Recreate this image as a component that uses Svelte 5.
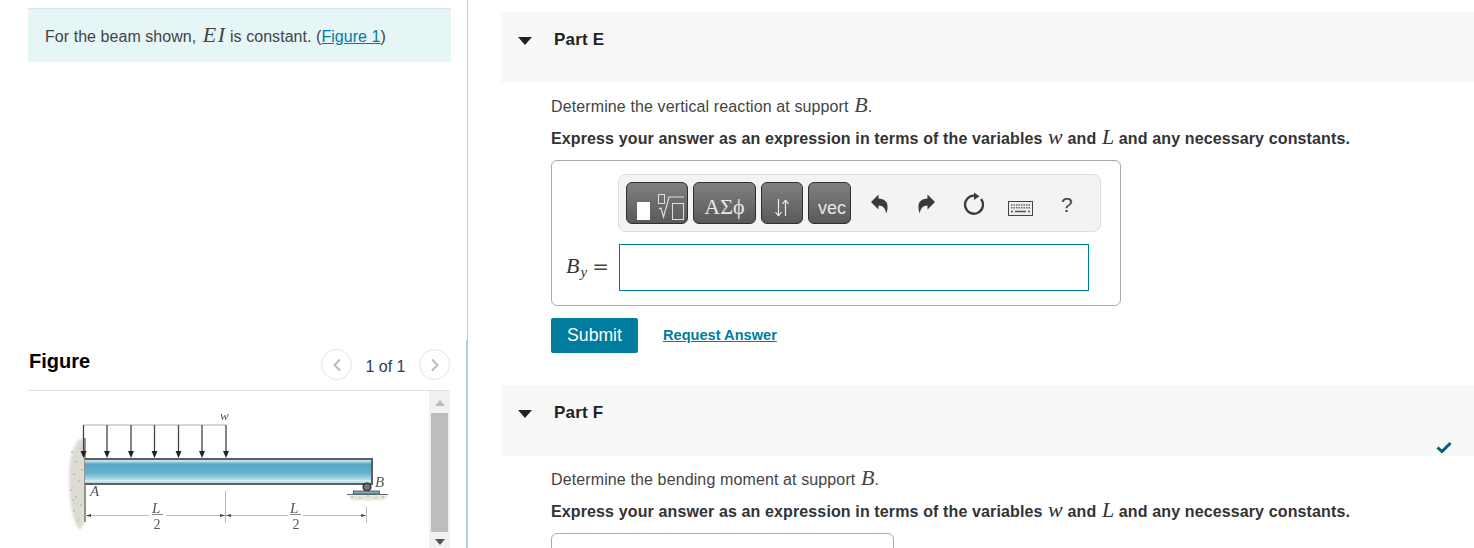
<script>
  const arrows = [83.5, 107, 131, 154.5, 178.5, 202, 226];
  const tools = [
    { cls: 'b1', w: 62 }, { cls: 'b2', w: 63 }, { cls: 'b3', w: 42 }, { cls: 'b4', w: 43 }
  ];
  const specks = [[72,452],[76,462],[80,448],[74,474],[79,481],[71,490],[76,497],[81,505],[74,511],[78,520],[82,470],[73,500],[352,497],[360,498],[368,496],[376,498],[383,497]];
</script>

<div class="page">
  <section class="left">
    <div class="intro"><span>For the beam shown, <i class="m big ei">EI</i> is constant. (<a href="#f">Figure 1</a>)</span></div>

    <div class="fig-head">
      <h2>Figure</h2>
      <div class="pager">
        <span class="circ"><svg width="10" height="14" viewBox="0 0 10 14"><path d="M8 1.500 2.500 7 8 12.500" fill="none" stroke="#bbb" stroke-width="2"/></svg></span>
        <span class="count">1 of 1</span>
        <span class="circ"><svg width="10" height="14" viewBox="0 0 10 14"><path d="M2 1.500 7.500 7 2 12.500" fill="none" stroke="#bbb" stroke-width="2"/></svg></span>
      </div>
    </div>

    <div class="fig-body">
      <div class="canvas">
        <svg width="402" height="157" viewBox="28 391 402 157" class="beam">
          <defs>
            <linearGradient id="bm" x1="0" y1="0" x2="0" y2="1">
              <stop offset="0" stop-color="#dcebef"/>
              <stop offset=".1" stop-color="#b4dae6"/>
              <stop offset=".2" stop-color="#55a8c6"/>
              <stop offset=".55" stop-color="#62b0cb"/>
              <stop offset=".8" stop-color="#a7d5e2"/>
              <stop offset=".86" stop-color="#d5ebf0"/>
              <stop offset="1" stop-color="#a6d4e0"/>
            </linearGradient>
          </defs>
          <path class="soft" d="M78 440 L85 438 V522 L80 530 C72 522 69 500 69 480 C69 462 71 450 78 440Z" fill="#dedcd2"/>
          <path class="soft" d="M348 495H388L384 500H352Z" fill="#e3e1d6"/>
          {#each specks as [x, y]}
            <circle cx={x} cy={y} r=".8" fill="#a9a79b"/>
          {/each}
          <path d="M85 438V522" stroke="#555" stroke-width="1.200"/>
          <path d="M83.500 425H226" stroke="#aaa" stroke-width="1"/>
          {#each arrows as x}
            <path d={`M${x} 425V451`} stroke="#444" stroke-width="1.300"/>
            <path d={`M${x - 3} 451H${x + 3}L${x} 458Z`} fill="#222"/>
          {/each}
          <rect x="85" y="459" width="287" height="25" fill="url(#bm)"/>
          <path d="M85 459H372V484H85" fill="none" stroke="#5a5f62" stroke-width="2"/>
          <circle cx="367" cy="487" r="3.800" fill="#777" stroke="#333" stroke-width="1.500"/>
          <rect x="353.500" y="491" width="26" height="3" fill="#6fb2c8" stroke="#444" stroke-width=".8"/>
          <path d="M347 494.500H388" stroke="#666"/>
          <path d="M225.500 491V523M366.500 507V523" stroke="#bbb"/>
          <path d="M85 515.500H149M166 515.500H225M225 515.500H288M303 515.500H367" stroke="#bbb"/>
          <path d="M86 515.500l5-1.500v3zM225 515.500l-5-1.500v3zM226 515.500l5-1.500v3zM366 515.500l-5-1.500v3z" fill="#444"/>
          <path d="M152 514.500H163M290 514.500H301" stroke="#888"/>
          <text x="220" y="420" class="lbl w">w</text>
          <text x="90" y="496" class="lbl big">A</text>
          <text x="375" y="487" class="lbl big">B</text>
          <text x="152" y="512.500" class="lbl big">L</text>
          <text x="153.500" y="529" class="lbl big up">2</text>
          <text x="290" y="512.500" class="lbl big">L</text>
          <text x="292.500" y="529" class="lbl big up">2</text>
        </svg>
      </div>
      <div class="scroll">
        <svg width="10" height="6" viewBox="0 0 10 6"><path d="M0 6 5 0l5 6Z" fill="#bbb"/></svg>
        <div class="thumb"></div>
        <svg width="10" height="6" viewBox="0 0 10 6"><path d="M0 0h10L5 6Z" fill="#555"/></svg>
      </div>
    </div>
  </section>

  <div class="rule"></div>

  <section class="right">
    <div class="part-head">
      <svg class="caret" width="14" height="8" viewBox="0 0 14 8"><path d="M0 0h14L7 8Z" fill="#222"/></svg>
      <h3>Part E</h3>
    </div>
    <div class="part-body">
      <p class="q">Determine the vertical reaction at support <i class="m big">B</i>.</p>
      <p class="ins">Express your answer as an expression in terms of the variables <i class="m big">w</i> and <i class="m big">L</i> and any necessary constants.</p>

      <div class="answer">
        <div class="toolbar">
          <div class="btns">
            {#each tools as t}
              <button class={`tool ${t.cls}`} style={`width:${t.w}px`}>
                {#if t.cls === 'b1'}
                  <svg width="60" height="40" viewBox="0 0 60 40">
                    <rect x="10" y="19" width="13" height="18" fill="#fff"/>
                    <rect x="31.500" y="11.500" width="6" height="9" fill="none" stroke="#ddd" stroke-width="1"/>
                    <path d="M32 26l2 -1 2.500 9 5.500 -20H57" fill="none" stroke="#ddd" stroke-width="1.200"/>
                    <rect x="45.500" y="20.500" width="11" height="16" fill="none" stroke="#ddd" stroke-width="1"/>
                  </svg>
                {:else if t.cls === 'b2'}
                  <span class="greek">ΑΣϕ</span>
                {:else if t.cls === 'b3'}
                  <svg width="18" height="20" viewBox="0 0 18 20">
                    <path d="M5.500 1V18M5.500 18l-3-4M5.500 18l3-4M12.500 18V2M12.500 2l-3 4M12.500 2l3 4" fill="none" stroke="#eee" stroke-width="1.200"/>
                  </svg>
                {:else}
                  <span class="vec">vec</span>
                {/if}
              </button>
            {/each}
          </div>
          <div class="acts">
            <svg class="undo" width="18" height="21" viewBox="0 0 18 21"><path d="M1 9 8.500 1.500V5.500C14 5.500 18 9 17.500 14C17.500 17 17 19 16 20.500C16 16 13 12.500 8.500 12.500V16.500Z" fill="#3a3a3a"/></svg>
            <svg class="redo" width="18" height="21" viewBox="0 0 18 21"><path d="M17 9 9.500 1.500V5.500C4 5.500 0 9 .5 14C.5 17 1 19 2 20.500C2 16 5 12.500 9.500 12.500V16.500Z" fill="#3a3a3a"/></svg>
            <svg class="reset" width="22" height="24" viewBox="0 0 22 24"><path d="M11 3.700A9 9 0 1 0 18 7" fill="none" stroke="#3a3a3a" stroke-width="2.300"/><path d="M11 .5 16.500 4.300 11 8Z" fill="#3a3a3a"/></svg>
            <svg class="kbd" width="25" height="15" viewBox="0 0 25 15">
              <rect x=".5" y=".5" width="24" height="14" fill="#eee" stroke="#444"/>
              <path d="M3 4h19M3 6.800h19" stroke="#666" stroke-width="1.500" stroke-dasharray="1.500 1"/>
              <path d="M3 10.500h2M7 10.500h11M20 10.500h2" stroke="#555" stroke-width="1.500"/>
            </svg>
            <span class="help">?</span>
          </div>
        </div>
        <div class="eq">
          <span class="lhs"><i class="m eqv">B<sub>y</sub></i><span class="eqs">=</span></span>
          <div class="input"></div>
        </div>
      </div>

      <div class="actions">
        <button class="submit">Submit</button>
        <a href="#r" class="req">Request Answer</a>
      </div>
    </div>

    <div class="part-head f">
      <svg class="caret" width="14" height="8" viewBox="0 0 14 8"><path d="M0 0h14L7 8Z" fill="#222"/></svg>
      <h3>Part F</h3>
      <svg class="check" width="16" height="12" viewBox="0 0 16 12"><path d="M1.500 6.500 6 10.500 14.500 2" fill="none" stroke="#00607c" stroke-width="3"/></svg>
    </div>
    <div class="part-body">
      <p class="q">Determine the bending moment at support <i class="m big">B</i>.</p>
      <p class="ins">Express your answer as an expression in terms of the variables <i class="m big">w</i> and <i class="m big">L</i> and any necessary constants.</p>
      <div class="answer next"></div>
    </div>
  </section>
</div>

<style>
  :global(body) { margin: 0; background: #fff; }
  .page {
    display: flex; width: 1474px; height: 548px; overflow: hidden;
    font-family: "Liberation Sans", Arial, sans-serif; font-size: 16px; color: #333;
  }
  .left { width: 466px; flex: none; padding: 8px 16px 0 28px; box-sizing: border-box; display: flex; flex-direction: column; }
  .rule {
    width: 2px; flex: none; height: 548px;
    background:
      linear-gradient(#b8cfe2, #b8cfe2) 0 340px / 2px 208px no-repeat,
      linear-gradient(#c6ccd3, #c6ccd3) 1px 0 / 1px 340px no-repeat;
  }
  .right { flex: 1; min-width: 0; padding: 12px 0 0 33px; }

  .intro {
    height: 54px; box-sizing: border-box; width: 423px; flex: none;
    border-top: 1px solid #dde3e6; background: #e6f5f6; padding: 2px 17px 0;
    display: flex; align-items: center; color: #444; letter-spacing: .05px; white-space: nowrap;
  }
  .intro a { color: #007c9e; }
  .m { font-family: "Liberation Serif", "DejaVu Serif", serif; font-style: italic; }
  .big { font-size: 22px; line-height: 0; font-weight: 400; margin: 0 0 0 1px; }
  .ei { letter-spacing: 1.500px; margin: 0 -1px 0 2px; }

  .fig-head {
    margin-top: 287px; height: 42px; box-sizing: border-box; border-bottom: 1px solid #dde1e4; flex: none;
    width: 422px; display: flex; justify-content: space-between; align-items: flex-start;
  }
  h2 { margin: 0 0 0 1px; font-size: 20px; line-height: 24px; color: #000; font-weight: 700; }
  .pager { display: flex; align-items: flex-start; }
  .circ {
    width: 29px; height: 29px; border: 1px solid #e4e4e4; border-radius: 50%;
    display: flex; align-items: center; justify-content: center; box-sizing: content-box;
  }
  .count { width: 67px; text-align: center; color: #333b55; font-size: 16px; line-height: 31px; padding-top: 2px; }

  .fig-body { display: flex; height: 157px; width: 422px; flex: none; }
  .canvas { width: 402px; height: 157px; overflow: hidden; }
  .beam { display: block; filter: blur(.35px); }
  .soft { filter: blur(1px); }
  .lbl { font-family: "Liberation Serif", serif; font-style: italic; font-size: 14px; fill: #555; }
  .lbl.w { font-size: 13px; }
  .lbl.big { font-size: 15px; margin: 0; }
  .lbl.up { font-style: normal; font-size: 14px; }
  .scroll {
    width: 21px; background: #f1f1f1; display: flex; flex-direction: column; align-items: center;
    justify-content: space-between; padding: 9px 0 3px; box-sizing: border-box;
  }
  .thumb { width: 17px; height: 119px; background: #bdbdbd; margin-top: 6px; margin-bottom: 7px; }

  .part-head {
    height: 71px; background: #f8f8f8; display: flex; align-items: flex-start; position: relative;
    padding: 17px 0 0 17px; box-sizing: border-box;
  }
  .caret { margin-top: 8px; flex: none; }
  h3 { margin: 1px 0 0 22px; font-size: 17px; letter-spacing: .2px; line-height: 20px; color: #222; font-weight: 700; }
  .check { position: absolute; left: 935px; top: 56px; }

  .part-body { padding-left: 50px; }
  .q { margin: 0; padding-top: 12px; height: 24px; line-height: 24px; color: #444; white-space: nowrap; letter-spacing: .12px; }
  .ins { margin: 8px 0 0; height: 24px; line-height: 24px; font-weight: 700; color: #333; white-space: nowrap; letter-spacing: .125px; }

  .answer {
    margin-top: 9px; width: 570px; height: 146px; box-sizing: border-box;
    border: 1px solid #aaa; border-radius: 6px; padding: 13px 0 0 14px;
  }
  .answer.next { width: 343px; }
  .toolbar {
    margin-left: 52px; width: 483px; height: 58px; box-sizing: border-box;
    background: #f3f3f3; border: 1px solid #ddd; border-radius: 8px;
    display: flex; align-items: center; padding: 0 0 0 7px;
  }
  .btns { display: flex; gap: 5px; }
  .tool {
    height: 42px; padding: 0; box-sizing: border-box; border: 1px solid #2f2f2f; border-radius: 6px;
    background: linear-gradient(#808080, #595959); color: #fff;
    display: flex; align-items: center; justify-content: center;
    font-family: "Liberation Sans", sans-serif;
  }
  .b3 svg { margin-top: 10px; }
  .greek { font-family: "Liberation Serif", serif; font-size: 22px; color: #e8e8e8; padding-top: 8px; }
  .vec { font-size: 18px; color: #e8e8e8; padding: 10px 0 0 5px; }
  .acts { display: flex; align-items: flex-start; margin-left: 19px; margin-top: 6px; height: 26px; }
  .undo { margin-right: 30px; }
  .redo { margin-right: 27px; }
  .reset { margin-right: 23px; margin-top: -1px; }
  .kbd { margin-right: 28px; margin-top: 8px; }
  .help { font-size: 21px; line-height: 24px; color: #444; }

  .eq { display: flex; align-items: center; margin-top: 12px; }
  .lhs { width: 53px; white-space: nowrap; display: flex; align-items: center; margin-top: -3px; }
  .eqv { font-size: 22px; color: #333; letter-spacing: 1px; }
  .eqv sub { font-size: 15px; line-height: 0; vertical-align: -4px; }
  .eqs { font-family: "DejaVu Sans", sans-serif; font-size: 20px; color: #444; margin-left: 4px; }
  .input { width: 470px; height: 47px; box-sizing: border-box; border: 1px solid #007c9e; }

  .actions { margin-top: 12px; display: flex; align-items: center; height: 35px; }
  .submit {
    width: 87px; height: 35px; padding: 0; border: 0; border-radius: 2px; background: #007c9e; color: #fff;
    font-family: "Liberation Sans", sans-serif; font-size: 17.600px;
  }
  .req { margin: -1px 0 0 25px; color: #007c9e; font-weight: 700; font-size: 14.600px; }
  .part-head.f { margin-top: 32px; }
</style>
